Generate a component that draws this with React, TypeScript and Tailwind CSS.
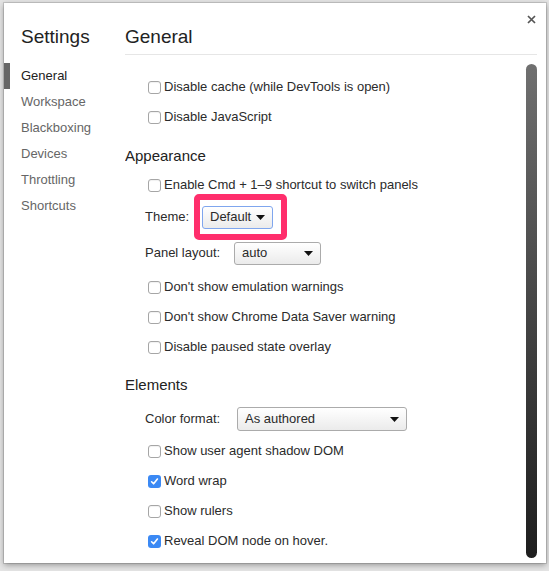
import React from "react";

const font = { fontFamily: '"Liberation Sans", Arial, sans-serif' };

function Checkbox({ checked }: { checked?: boolean }) {
  if (checked) {
    return (
      <span className="flex h-[13px] w-[13px] shrink-0 items-center justify-center rounded-[3px] bg-[#3b89f4]">
        <svg width="9" height="9" viewBox="0 0 9 9">
          <path d="M1.6 4.8 L3.6 6.8 L7.4 2" fill="none" stroke="white" strokeWidth="1.6" strokeLinecap="round" strokeLinejoin="round" />
        </svg>
      </span>
    );
  }
  return <span className="block h-[13px] w-[13px] shrink-0 rounded-[3px] border border-[#a6a6a6] bg-white shadow-[inset_0_1px_1px_rgba(0,0,0,0.06)]" />;
}

function CheckRow({ label, checked }: { label: string; checked?: boolean }) {
  return (
    <div className="flex h-[30px] items-center gap-[3px] pl-[23px] text-[13px] text-[#2b2b2b]">
      <Checkbox checked={checked} />
      <span>{label}</span>
    </div>
  );
}

function Arrow() {
  return (
    <svg width="9" height="5" viewBox="0 0 9 5" className="shrink-0">
      <path d="M0 0 L9 0 L4.5 5 Z" fill="#111" />
    </svg>
  );
}

function Select({ value, width, focused }: { value: string; width: string; focused?: boolean }) {
  return (
    <div
      className={`flex h-[23px] items-center justify-between rounded-[3px] border bg-gradient-to-b from-white to-[#ebebeb] pl-[7px] pr-[7px] text-[13px] text-[#2a2a2a] ${width} ${
        focused ? "border-[#7fa6ee]" : "border-[#ababab]"
      }`}
    >
      <span>{value}</span>
      <Arrow />
    </div>
  );
}

const navItems = ["General", "Workspace", "Blackboxing", "Devices", "Throttling", "Shortcuts"];

export default function App() {
  return (
    <div className="h-[571px] w-[549px] overflow-hidden bg-[#e4e4e4] pl-[4px] pt-[3px]" style={font}>
      <div className="flex h-[560px] w-[542px] overflow-hidden bg-white shadow-[0_0_0_1px_rgba(0,0,0,0.12),0_2px_6px_rgba(0,0,0,0.35)]">
        {/* Sidebar */}
        <div className="flex w-[121px] shrink-0 flex-col pt-[22px]">
          <div className="h-[24px] pl-[17px] text-[19px] leading-[24px] text-[#222]">Settings</div>
          <div className="mt-[14px] flex flex-col">
            {navItems.map((n, i) => (
              <div key={n} className="flex h-[26px] items-center">
                <span className={`h-[26px] w-[6px] ${i === 0 ? "bg-[#666]" : "bg-transparent"}`} />
                <span className={`pl-[11px] text-[13px] ${i === 0 ? "text-[#222]" : "text-[#666]"}`}>{n}</span>
              </div>
            ))}
          </div>
        </div>

        {/* Main */}
        <div className="flex flex-1 flex-col pr-[9px]">
          <div className="flex h-[52px] items-start justify-between border-b border-[#e6e6e6] pt-[22px]">
            <span className="h-[24px] text-[19px] leading-[24px] text-[#222]">General</span>
            <svg width="9" height="9" viewBox="0 0 9 9" className="mr-[1px] mt-[-10px]">
              <path d="M1 1 L8 8 M8 1 L1 8" stroke="#555" strokeWidth="1.7" />
            </svg>
          </div>
          <div className="flex flex-1 overflow-hidden">
            <div className="flex flex-1 flex-col pt-[17px]">
              <CheckRow label="Disable cache (while DevTools is open)" />
              <CheckRow label="Disable JavaScript" />

              <div className="mt-[12px] h-[24px] text-[15px] leading-[24px] text-[#222]">Appearance</div>
              <div className="mt-[2px]">
                <CheckRow label="Enable Cmd + 1–9 shortcut to switch panels" />
              </div>
              <div className="flex h-[34px] items-center pl-[20px] text-[13px] text-[#2b2b2b]">
                <span className="w-[57px]">Theme:</span>
                <div className="relative">
                  <Select value="Default" width="w-[71px]" focused />
                  <div className="pointer-events-none absolute bottom-[-11px] left-[-8px] right-[-14px] top-[-12px] rounded-[5px] border-[6px] border-[#ff2e6c]" />
                </div>
              </div>
              <div className="flex h-[38px] items-center pl-[20px] text-[13px] text-[#2b2b2b]">
                <span className="w-[89px]">Panel layout:</span>
                <Select value="auto" width="w-[87px]" />
              </div>
              <CheckRow label="Don't show emulation warnings" />
              <CheckRow label="Don't show Chrome Data Saver warning" />
              <CheckRow label="Disable paused state overlay" />

              <div className="mt-[11px] h-[24px] text-[15px] leading-[24px] text-[#222]">Elements</div>
              <div className="mt-[5px] flex h-[34px] items-center pl-[20px] text-[13px] text-[#2b2b2b]">
                <span className="w-[92px]">Color format:</span>
                <Select value="As authored" width="w-[170px] h-[24px]" />
              </div>
              <CheckRow label="Show user agent shadow DOM" />
              <CheckRow label="Word wrap" checked />
              <CheckRow label="Show rulers" />
              <CheckRow label="Reveal DOM node on hover." checked />
            </div>
            <div className="flex w-[11px] shrink-0 flex-col pb-[5px] pt-[9px]">
              <div className="flex-1 rounded-full bg-gradient-to-b from-[#707070] to-[#1e1e1e]" />
            </div>
          </div>
        </div>
      </div>
    </div>
  );
}
